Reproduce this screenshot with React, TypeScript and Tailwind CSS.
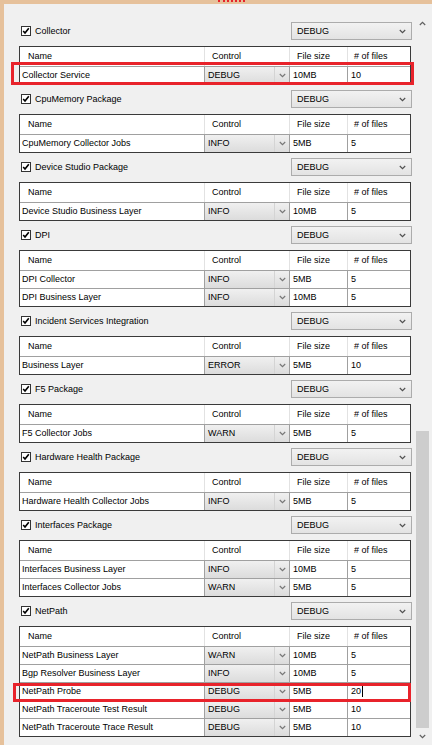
import React from "react";

type Row = [string, string, string, string];
const sections: { title: string; rows: Row[] }[] = [
  { title: "Collector", rows: [["Collector Service", "DEBUG", "10MB", "10"]] },
  { title: "CpuMemory Package", rows: [["CpuMemory Collector Jobs", "INFO", "5MB", "5"]] },
  { title: "Device Studio Package", rows: [["Device Studio Business Layer", "INFO", "10MB", "5"]] },
  {
    title: "DPI",
    rows: [
      ["DPI Collector", "INFO", "5MB", "5"],
      ["DPI Business Layer", "INFO", "10MB", "5"],
    ],
  },
  { title: "Incident Services Integration", rows: [["Business Layer", "ERROR", "5MB", "10"]] },
  { title: "F5 Package", rows: [["F5 Collector Jobs", "WARN", "5MB", "5"]] },
  { title: "Hardware Health Package", rows: [["Hardware Health Collector Jobs", "INFO", "5MB", "5"]] },
  {
    title: "Interfaces Package",
    rows: [
      ["Interfaces Business Layer", "INFO", "10MB", "5"],
      ["Interfaces Collector Jobs", "WARN", "5MB", "5"],
    ],
  },
  {
    title: "NetPath",
    rows: [
      ["NetPath Business Layer", "WARN", "10MB", "5"],
      ["Bgp Resolver Business Layer", "INFO", "10MB", "5"],
      ["NetPath Probe", "DEBUG", "5MB", "20"],
      ["NetPath Traceroute Test Result", "DEBUG", "5MB", "10"],
      ["NetPath Traceroute Trace Result", "DEBUG", "5MB", "10"],
    ],
  },
];

function Chevron({ color = "#505050" }: { color?: string }) {
  return (
    <svg width="7" height="5" viewBox="0 0 7 5">
      <polyline points="0.8,1 3.5,3.6 6.2,1" fill="none" stroke={color} strokeWidth="1.2" />
    </svg>
  );
}

function CheckBox() {
  return (
    <div className="w-[10px] h-[10px] border border-[#333333] bg-white flex items-center justify-center">
      <svg width="8" height="8" viewBox="0 0 8 8">
        <polyline points="1.2,4 3,6 6.8,1.2" fill="none" stroke="#000" strokeWidth="1.6" />
      </svg>
    </div>
  );
}

function Section({ title, rows }: { title: string; rows: Row[] }) {
  return (
    <div className="flex flex-col pb-[5px]">
      <div className="h-[18px] flex items-center">
        <div className="ml-[2px] flex items-center">
          <CheckBox />
          <span className="ml-[4px] text-[9px] text-black leading-none">{title}</span>
        </div>
        <div className="ml-auto mr-[3px] w-[121px] h-[18px] border border-[#acacac] bg-linear-to-b from-[#f2f2f2] to-[#e3e3e3] flex items-center pl-[5px] pr-[5px]">
          <span className="text-[9px] leading-none text-black">DEBUG</span>
          <div className="ml-auto">
            <Chevron />
          </div>
        </div>
      </div>
      <div className="mt-[6px] w-[392px] border border-[#3a3a3a] bg-white">
        <div className="grid grid-cols-[185px_85px_58px_62px] h-[19px] text-[9px] leading-none text-black">
          <div className="flex items-center pl-[8px] border-r border-[#e2e2e2]">Name</div>
          <div className="flex items-center pl-[7px] border-r border-[#e2e2e2]">Control</div>
          <div className="flex items-center pl-[7px] border-r border-[#e2e2e2]">File size</div>
          <div className="flex items-center pl-[6px]">
            # of files
          </div>
        </div>
        {rows.map((r, i) => (
          <div
            key={i}
            className="grid grid-cols-[185px_85px_58px_62px] h-[18px] border-t border-[#a0a0a0] text-[9px] leading-none text-black"
          >
            <div className="flex items-center pl-[2px] border-r border-[#a0a0a0] whitespace-nowrap">{r[0]}</div>
            <div className="flex border-r border-[#a0a0a0] bg-linear-to-b from-[#f0f0f0] to-[#dcdcdc]">
              <div className="flex-1 flex items-center pl-[3px]">{r[1]}</div>
              <div className="w-[15px] border-l border-[#d4d4d4] flex items-center justify-center">
                <Chevron color="#777777" />
              </div>
            </div>
            <div className="flex items-center pl-[3px] border-r border-[#a0a0a0]">{r[2]}</div>
            <div className="flex items-center pl-[3px]">
              {r[3]}
              {r[0] === "NetPath Probe" && <span className="ml-px w-px h-[11px] bg-black" />}
            </div>
          </div>
        ))}
      </div>
    </div>
  );
}

export default function App() {
  return (
    <div
      className="relative w-[436px] h-[751px] bg-white overflow-hidden"
      style={{ fontFamily: '"Liberation Sans", Arial, sans-serif' }}
    >
      <div className="w-[432px] h-[745px] border-l-4 border-t-4 border-[#e6c19b] bg-[#f0f0f0] flex">
        <div className="w-[411px] pl-[15px] pt-[18px] flex flex-col">
          {sections.map((s) => (
            <Section key={s.title} title={s.title} rows={s.rows} />
          ))}
        </div>
        <div className="w-[17px] flex flex-col">
          <div className="mt-[11px] h-[17px] w-[13px] ml-px flex items-center justify-center">
            <svg width="7" height="5" viewBox="0 0 7 5">
              <polyline points="0.8,4 3.5,1.4 6.2,4" fill="none" stroke="#606060" strokeWidth="1.2" />
            </svg>
          </div>
          <div className="h-[399px]" />
          <div className="flex-1 w-[13px] ml-px bg-[#cdcdcd]" />
          <div className="h-[17px] w-[13px] ml-px flex items-center justify-center">
            <Chevron color="#606060" />
          </div>
        </div>
      </div>

      {/* red highlight boxes */}
      <div className="absolute left-[11px] top-[62px] w-[403px] h-[23px] border-[3px] border-[#e8232b]" />
      <div className="absolute left-[13px] top-[683px] w-[398px] h-[19px] border-[3px] border-[#e8232b]" />
      {/* small red dotted marker */}
      <div className="absolute left-[218px] top-0 w-[27px] h-[2px] border-t-2 border-dotted border-[#e8232b]" />
    </div>
  );
}
